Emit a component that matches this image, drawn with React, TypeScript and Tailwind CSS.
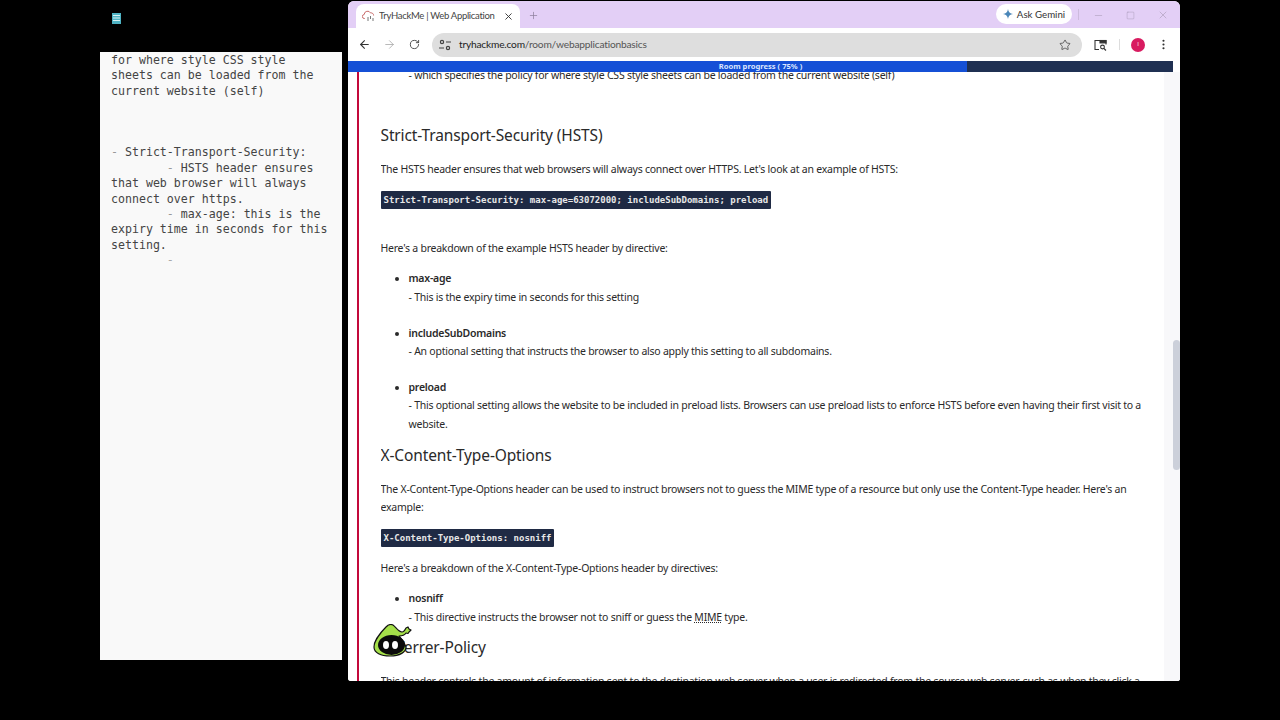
import { ArrowLeft, ArrowRight, RotateCw, Star, X, Plus, Minus, Square, MoreVertical } from "lucide-react";

const chrome = "font-['Open_Sans',sans-serif]";

function Favicon() {
  return (
    <svg width="14" height="14" viewBox="0 0 14 14" fill="none" stroke="#c96a6a" strokeWidth="1">
      <path d="M3 9.5H2.5a2 2 0 0 1 -.3-4A3.4 3.4 0 0 1 8.6 4a2.4 2.4 0 0 1 3 2.5" />
      <path d="M6 8v4M8.5 7v3M11 9v3" stroke="#777" />
    </svg>
  );
}

function Mascot() {
  return (
    <svg width="40" height="33" viewBox="0 0 40 33" className="absolute left-[373px] top-[624px]">
      <path d="M1 23C1 17 8 8 13 3C15 1 18 0 20 1C23 3 25 8 29 8C31 8 32 6 33 4L35 3L36 5L38 6L36 8L35 9.500L33 9C31 12 28 12 26 12C30 16 32 20 33 23C33 28 27 32 17 32C8 32 1 29 1 23Z" fill="#a5e04a" stroke="#111" strokeWidth="1.200" strokeLinejoin="round" />
      <ellipse cx="18.500" cy="21" rx="13.500" ry="10" fill="#0b0b0b" />
      <ellipse cx="13" cy="21" rx="3" ry="4" fill="#fff" />
      <ellipse cx="22" cy="21" rx="3" ry="4" fill="#fff" />
    </svg>
  );
}

export default function App() {
  return (
    <div className="relative flex h-[720px] w-[1280px] overflow-hidden bg-black">
      {/* Notes window */}
      <div className="ml-[100px] flex w-[242px] flex-col">
        <div className="flex h-[52px] items-start pl-[12px] pt-[13px]">
          <svg width="9" height="11" viewBox="0 0 9 11">
            <rect width="9" height="11" fill="#4fb3c4" />
            <path d="M1 2.5h7M1 5h7M1 7.5h7" stroke="#d8f2f4" strokeWidth="1" />
          </svg>
        </div>
        <div className="h-[608px] whitespace-pre bg-[#f9f9f9] pl-[11px] pt-[1px] font-['DejaVu_Sans_Mono',monospace] text-[11.6px] leading-[15.4px] text-[#444]">
          {`for where style CSS style
sheets can be loaded from the
current website (self)



`}
          <span className="text-[#999]">-</span>
          {` Strict-Transport-Security:
        `}
          <span className="text-[#999]">-</span>
          {` HSTS header ensures
that web browser will always
connect over https.
        `}
          <span className="text-[#999]">-</span>
          {` max-age: this is the
expiry time in seconds for this
setting.
        `}
          <span className="text-[#aaa]">-</span>
        </div>
      </div>

      {/* Browser window */}
      <div className="ml-[6px] mt-[1px] flex h-[680px] w-[832px] flex-col overflow-hidden rounded-t-[6px] rounded-b-[3px] bg-white">
        {/* Tab strip */}
        <div className={`flex h-[27px] items-end bg-[#e3cff6] pl-[8px] ${chrome}`}>
          <div className="flex h-[24px] w-[164px] items-center rounded-t-[8px] bg-white pl-[6px] pr-[6px]">
            <Favicon />
            <span className="ml-[3px] w-[118px] overflow-hidden whitespace-nowrap font-['Lato',sans-serif] text-[9.5px] tracking-[-0.3px] text-[#444]">TryHackMe | Web Application B</span>
            <X size={11} strokeWidth={2} className="ml-[6px] text-[#333]" />
          </div>
          <Plus size={11} strokeWidth={1.6} className="mb-[7px] ml-[8px] text-[#8d7f9c]" />
          <div className="mb-[4px] ml-auto flex h-[20px] w-[76px] items-center justify-center gap-[4px] rounded-full bg-white font-['Lato',sans-serif] text-[9.7px] text-[#333]">
            <svg width="10" height="10" viewBox="0 0 10 10">
              <path d="M5 0C5.4 3 7 4.6 10 5 7 5.4 5.4 7 5 10 4.6 7 3 5.4 0 5 3 4.6 4.6 3 5 0Z" fill="#4a86b8" />
            </svg>
            Ask Gemini
          </div>
          <div className="mb-[8px] ml-[6px] h-[11px] w-px bg-[#cdbbdd]" />
          <div className="mb-[7px] flex w-[101px] items-center justify-between pl-[14px] pr-[11px] text-[#9c8fa9]">
            <Minus size={11} strokeWidth={1} />
            <Square size={9} strokeWidth={1} />
            <X size={12} strokeWidth={1} />
          </div>
        </div>

        {/* Toolbar */}
        <div className={`flex h-[33px] items-center bg-white pl-[10px] pr-[10px] ${chrome}`}>
          <ArrowLeft size={13} strokeWidth={2} className="text-[#333]" />
          <ArrowRight size={13} strokeWidth={1.5} className="ml-[12px] text-[#a8a8a8]" />
          <RotateCw size={11} strokeWidth={2} className="ml-[13px] text-[#444]" />
          <div className="ml-[12px] flex h-[24px] w-[651px] items-center rounded-full bg-[#dedede] pl-[6px] pr-[11px]">
            <svg width="14" height="12" viewBox="0 0 14 12" fill="none" stroke="#444" strokeWidth="1.2">
              <circle cx="4" cy="3" r="1.6" />
              <path d="M8 3h5M1 9h5" />
              <circle cx="10" cy="9" r="1.6" />
            </svg>
            <span className="ml-[7px] font-['Lato',sans-serif] text-[10.2px] tracking-[-0.2px] text-[#222]">tryhackme.com<span className="text-[#555]">/room/webapplicationbasics</span></span>
            <Star size={12} strokeWidth={1.6} className="ml-auto text-[#444]" />
          </div>
          <svg width="13" height="12" viewBox="0 0 13 12" fill="none" stroke="#333" strokeWidth="1.1" className="ml-[12px]">
            <path d="M5 10.5H1V1.5h11v4" />
            <rect x="6" y="1.5" width="6" height="2.4" fill="#333" />
            <circle cx="8.5" cy="8" r="1.9" />
            <path d="M10 9.5l2 2" />
          </svg>
          <div className="ml-[12px] h-[11px] w-px bg-[#ddd]" />
          <div className="ml-[11px] flex h-[14px] w-[14px] items-center justify-center rounded-full bg-[#d81b60] text-[6px] text-white">I</div>
          <MoreVertical size={13} strokeWidth={2} className="ml-[12px] text-[#333]" />
        </div>

        {/* Page */}
        <div className="relative flex min-h-0 flex-1 bg-white">
          <div className="absolute left-0 top-0 z-10 flex h-[11px] w-[825px] bg-[#1f3052]">
            <div className="w-[619px] bg-[#1550d6]" />
            <span className="absolute inset-0 flex items-center justify-center font-['Noto_Sans',sans-serif] text-[7.6px] font-bold text-[#dbe6ff]">Room progress ( 75% )</span>
          </div>
          <div className="ml-[9px] mt-[11px] w-[2px] bg-[#c3093b]" />
          <div className="ml-[21.5px] w-[766px] overflow-hidden pt-[5px] font-['Noto_Sans',sans-serif] text-[10.5px] leading-[18.4px] tracking-[-0.24px] text-[#2a2a2a]">
            <p className="pl-[28px]">- which specifies the policy for where style CSS style sheets can be loaded from the current website (self)</p>
            <h2 className="mt-[39px] text-[15.5px] leading-[24px] tracking-[-0.13px] text-[#2a2a2a]">Strict-Transport-Security (HSTS)</h2>
            <p className="mt-[13px]">The HSTS header ensures that web browsers will always connect over HTTPS. Let's look at an example of HSTS:</p>
            <div className="mt-[12px] flex">
              <code className="h-[18px] rounded-[1px] bg-[#1f2a44] px-[3px] font-['DejaVu_Sans_Mono',monospace] text-[9px] font-bold leading-[18px] tracking-[0] text-[#e8e8e8]">Strict-Transport-Security: max-age=63072000; includeSubDomains; preload</code>
            </div>
            <p className="mt-[30px]">Here's a breakdown of the example HSTS header by directive:</p>
            <ul className="mt-[12px] list-disc pl-[28px]">
              <li><b className="font-semibold">max-age</b><br />- This is the expiry time in seconds for this setting</li>
              <li className="mt-[18px]"><b className="font-semibold">includeSubDomains</b><br />- An optional setting that instructs the browser to also apply this setting to all subdomains.</li>
              <li className="mt-[17px]"><b className="font-semibold">preload</b><br />- This optional setting allows the website to be included in preload lists. Browsers can use preload lists to enforce HSTS before even having their first visit to a website.</li>
            </ul>
            <h2 className="mt-[10px] text-[15.5px] leading-[24px] tracking-[-0.13px] text-[#2a2a2a]">X-Content-Type-Options</h2>
            <p className="mt-[13px]">The X-Content-Type-Options header can be used to instruct browsers not to guess the MIME type of a resource but only use the Content-Type header. Here's an example:</p>
            <div className="mt-[12px] flex">
              <code className="h-[18px] rounded-[1px] bg-[#1f2a44] px-[3px] font-['DejaVu_Sans_Mono',monospace] text-[9px] font-bold leading-[18px] tracking-[0] text-[#e8e8e8]">X-Content-Type-Options: nosniff</code>
            </div>
            <p className="mt-[12px]">Here's a breakdown of the X-Content-Type-Options header by directives:</p>
            <ul className="mt-[12px] list-disc pl-[28px]">
              <li><b className="font-semibold">nosniff</b><br />- This directive instructs the browser not to sniff or guess the <span className="underline decoration-dotted">MIME</span> type.</li>
            </ul>
            <h2 className="mt-[9px] text-[15.5px] leading-[24px] tracking-[-0.13px] text-[#2a2a2a]">Referrer-Policy</h2>
            <p className="mt-[13px] whitespace-nowrap">This header controls the amount of information sent to the destination web server when a user is redirected from the source web server, such as when they click a</p>
          </div>
          {/* Scrollbar */}
          <div className="absolute right-0 top-[11px] bottom-0 w-[16px] bg-[#f8f8fa]">
            <div className="ml-[9px] mt-[268px] h-[130px] w-[7px] rounded-full bg-[#ccd0da]" />
          </div>
        </div>
      </div>
      <Mascot />
    </div>
  );
}
